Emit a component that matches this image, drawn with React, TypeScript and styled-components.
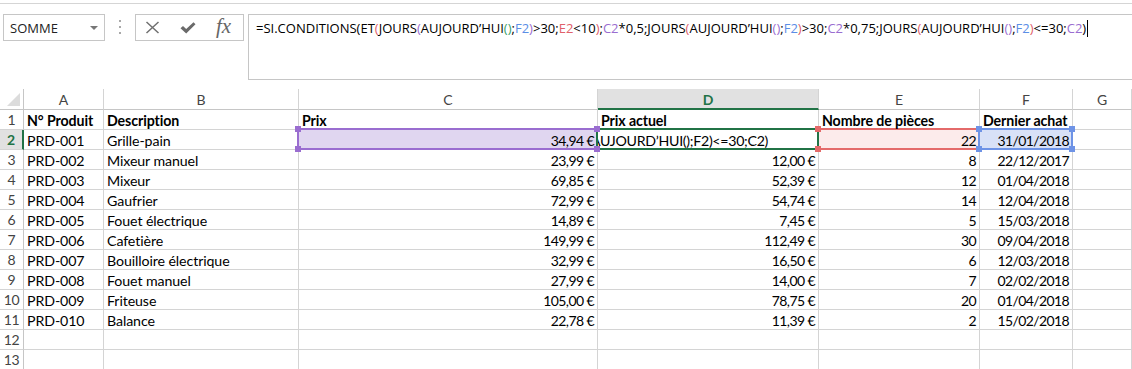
import styled, { createGlobalStyle } from "styled-components";

const GlobalStyle = createGlobalStyle`
  html, body {
    margin: 0;
    padding: 0;
    background: #fff;
    overflow: hidden;
  }
  body {
    font-family: Lato, "Liberation Sans", sans-serif;
  }
`;

const BLACK = "#000";
const RED = "#e0606a";
const PURPLE = "#9a6dd0";
const BLUE = "#5b8ee6";
const GREEN = "#3aa06a";
const EXCEL_GREEN = "#217346";

const formula: [string, string][] = [
  ["=SI.CONDITIONS(ET", BLACK],
  ["(", RED],
  ["JOURS", BLACK],
  ["(", PURPLE],
  ["AUJOURD’HUI", BLACK],
  ["()", GREEN],
  [";", BLACK],
  ["F2", BLUE],
  [")", PURPLE],
  [">30;", BLACK],
  ["E2", RED],
  ["<10", BLACK],
  [")", RED],
  [";", BLACK],
  ["C2", PURPLE],
  ["*0,5;JOURS", BLACK],
  ["(", RED],
  ["AUJOURD’HUI", BLACK],
  ["()", PURPLE],
  [";", BLACK],
  ["F2", BLUE],
  [")", RED],
  [">30;", BLACK],
  ["C2", PURPLE],
  ["*0,75;JOURS", BLACK],
  ["(", RED],
  ["AUJOURD’HUI", BLACK],
  ["()", PURPLE],
  [";", BLACK],
  ["F2", BLUE],
  [")", RED],
  ["<=30;", BLACK],
  ["C2", PURPLE],
  [")", BLACK],
];

const columns = ["A", "B", "C", "D", "E", "F", "G"];

const rows: string[][] = [
  ["N° Produit", "Description", "Prix", "Prix actuel", "Nombre de pièces", "Dernier achat", ""],
  ["PRD-001", "Grille-pain", "34,94 €", "", "22", "31/01/2018", ""],
  ["PRD-002", "Mixeur manuel", "23,99 €", "12,00 €", "8", "22/12/2017", ""],
  ["PRD-003", "Mixeur", "69,85 €", "52,39 €", "12", "01/04/2018", ""],
  ["PRD-004", "Gaufrier", "72,99 €", "54,74 €", "14", "12/04/2018", ""],
  ["PRD-005", "Fouet électrique", "14,89 €", "7,45 €", "5", "15/03/2018", ""],
  ["PRD-006", "Cafetière", "149,99 €", "112,49 €", "30", "09/04/2018", ""],
  ["PRD-007", "Bouilloire électrique", "32,99 €", "16,50 €", "6", "12/03/2018", ""],
  ["PRD-008", "Fouet manuel", "27,99 €", "14,00 €", "7", "02/02/2018", ""],
  ["PRD-009", "Friteuse", "105,00 €", "78,75 €", "20", "01/04/2018", ""],
  ["PRD-010", "Balance", "22,78 €", "11,39 €", "2", "15/02/2018", ""],
  ["", "", "", "", "", "", ""],
  ["", "", "", "", "", "", ""],
];

// column index -> reference highlight on row 2
const marks: Record<number, { line: string; fill: string }> = {
  2: { line: PURPLE, fill: "#e0d6f0" },
  4: { line: "#e46a6a", fill: "#fcebeb" },
  5: { line: "#6e93e6", fill: "#d8e1f7" },
};

const App = () => {
  return (
    <>
      <GlobalStyle />
      <Page>
        <TopStrip />
        <FormulaBar>
          <NameBox>
            SOMME
            <DropArrow />
          </NameBox>
          <Grip>
            <Dot />
            <Dot />
            <Dot />
          </Grip>
          <ButtonBox>
            <svg width="15" height="13" viewBox="0 0 15 13">
              <path d="M1.5 1 L13.5 12 M13.5 1 L1.5 12" stroke="#707070" strokeWidth="1.5" fill="none" />
            </svg>
            <svg width="16" height="12" viewBox="0 0 16 12">
              <path d="M0.5 6.2 L3 4 L6.2 7 L13.5 0.3 L15.5 2.3 L6.2 11.6 Z" fill="#6a6a6a" />
            </svg>
            <FxLabel>fx</FxLabel>
          </ButtonBox>
          <FormulaInput>
            {formula.map(([text, color], i) => (
              <Token key={i} $color={color}>
                {text}
              </Token>
            ))}
            <Caret />
          </FormulaInput>
        </FormulaBar>

        <Sheet>
          <Corner>
            <CornerTriangle />
          </Corner>
          {columns.map((c) => (
            <ColHeader key={c} $active={c === "D"}>
              {c}
            </ColHeader>
          ))}
          {rows.map((row, r) => (
            <RowGroup key={r}>
              <RowHeader $active={r === 1}>{r + 1}</RowHeader>
              {row.map((value, c) => {
                const numeric = r > 0 && c >= 2;
                const mark = r === 1 ? marks[c] : undefined;
                if (r === 1 && c === 3) {
                  return (
                    <Cell key={c} $numeric={false} $bold={false}>
                      <EditText>AUJOURD’HUI();F2)&lt;=30;C2)</EditText>
                      <ActiveFrame />
                    </Cell>
                  );
                }
                return (
                  <Cell key={c} $numeric={numeric} $bold={r === 0}>
                    {mark && (
                      <Mark $line={mark.line} $fill={mark.fill}>
                        <Handle $color={mark.line} $v="top" $h="left" />
                        <Handle $color={mark.line} $v="top" $h="right" />
                        <Handle $color={mark.line} $v="bottom" $h="left" />
                        <Handle $color={mark.line} $v="bottom" $h="right" />
                      </Mark>
                    )}
                    <CellText>{value}</CellText>
                  </Cell>
                );
              })}
            </RowGroup>
          ))}
        </Sheet>
      </Page>
    </>
  );
};

const Page = styled.div`
  width: 1132px;
  height: 369px;
  overflow: hidden;
`;

const TopStrip = styled.div`
  height: 3px;
  border-bottom: 1px solid #d5d5d5;
`;

const FormulaBar = styled.div`
  display: flex;
  align-items: flex-start;
  height: 66px;
  padding: 10px 0 0 3px;
  margin-bottom: 9px;
`;

const NameBox = styled.div`
  box-sizing: border-box;
  width: 102px;
  height: 27px;
  border: 1px solid #c6c6c6;
  display: flex;
  align-items: center;
  padding: 0 6px 0 6px;
  font-family: "Open Sans", "Noto Sans", sans-serif;
  font-size: 13px;
  color: #222;
`;

const DropArrow = styled.span`
  margin-left: auto;
  width: 0;
  height: 0;
  border-left: 4px solid transparent;
  border-right: 4px solid transparent;
  border-top: 4px solid #777;
`;

const Grip = styled.div`
  display: flex;
  flex-direction: column;
  gap: 4px;
  margin: 6px 0 0 14px;
`;

const Dot = styled.span`
  width: 2px;
  height: 2px;
  background: #a8a8a8;
`;

const ButtonBox = styled.div`
  box-sizing: border-box;
  width: 109px;
  height: 27px;
  margin-left: 14px;
  border: 1px solid #c6c6c6;
  display: flex;
  align-items: center;
  gap: 20px;
  padding-left: 9px;
`;

const FxLabel = styled.span`
  font-family: "Liberation Serif", serif;
  font-style: italic;
  font-size: 21px;
  color: #666;
  line-height: 1;
  margin-top: -3px;
`;

const FormulaInput = styled.div`
  box-sizing: border-box;
  flex: 1;
  height: 66px;
  margin-left: 4px;
  border: 1px solid #c6c6c6;
  border-right: none;
  padding: 4px 0 0 7px;
  font-family: "Open Sans", "Noto Sans", sans-serif;
  font-size: 13px;
  line-height: 18px;
  white-space: nowrap;
  overflow: hidden;
`;

const Token = styled.span<{ $color: string }>`
  color: ${(p) => p.$color};
`;

const Caret = styled.span`
  display: inline-block;
  width: 0;
  height: 17px;
  border-left: 1px solid #000;
  margin-left: 1px;
  vertical-align: -4px;
`;

const Sheet = styled.div`
  display: grid;
  grid-template-columns: 24px 80px 195px 299px 221px 161px 93px 1fr;
  grid-template-rows: 21px;
  grid-auto-rows: 20px;
`;

const RowGroup = styled.div`
  display: contents;
`;

const Corner = styled.div`
  box-sizing: border-box;
  border-right: 1px solid #c6c6c6;
  border-bottom: 1px solid #c6c6c6;
  display: flex;
  align-items: flex-end;
  justify-content: flex-end;
  padding: 0 3px 3px 0;
`;

const CornerTriangle = styled.div`
  width: 13px;
  height: 13px;
  background: #dcdcdc;
  clip-path: polygon(100% 0, 100% 100%, 0 100%);
`;

const ColHeader = styled.div<{ $active: boolean }>`
  box-sizing: border-box;
  display: flex;
  align-items: center;
  justify-content: center;
  padding-top: 1px;
  border-right: 1px solid #d4d4d4;
  border-bottom: ${(p) => (p.$active ? `2px solid ${EXCEL_GREEN}` : "1px solid #c6c6c6")};
  background: ${(p) => (p.$active ? "#e1e1e1" : "#fff")};
  color: ${(p) => (p.$active ? EXCEL_GREEN : "#444")};
  font-weight: ${(p) => (p.$active ? 700 : 400)};
  font-size: 14px;
`;

const RowHeader = styled.div<{ $active: boolean }>`
  box-sizing: border-box;
  display: flex;
  align-items: center;
  justify-content: center;
  border-bottom: 1px solid #d4d4d4;
  border-right: ${(p) => (p.$active ? `2px solid ${EXCEL_GREEN}` : "1px solid #c6c6c6")};
  background: ${(p) => (p.$active ? "#e1e1e1" : "#fff")};
  color: ${(p) => (p.$active ? EXCEL_GREEN : "#444")};
  font-weight: ${(p) => (p.$active ? 700 : 400)};
  font-size: 14px;
  letter-spacing: -0.3px;
`;

const Cell = styled.div<{ $numeric: boolean; $bold: boolean }>`
  box-sizing: border-box;
  position: relative;
  display: flex;
  align-items: center;
  justify-content: ${(p) => (p.$numeric ? "flex-end" : "flex-start")};
  padding: 1px 3px 0 3px;
  border-right: 1px solid #d4d4d4;
  border-bottom: 1px solid #d4d4d4;
  font-size: ${(p) => (p.$numeric ? "14px" : "14.2px")};
  letter-spacing: ${(p) => (p.$numeric ? "-0.6px" : "-0.1px")};
  font-weight: ${(p) => (p.$bold ? 700 : 400)};
  color: #000;
  white-space: nowrap;
`;

const CellText = styled.span`
  position: relative;
  z-index: 1;
`;

const EditText = styled.span`
  display: block;
  position: relative;
  z-index: 1;
  margin-left: -3px;
  overflow: hidden;
  text-indent: -7px;
  width: 100%;
  letter-spacing: -0.3px;
`;

const Mark = styled.div<{ $line: string; $fill: string }>`
  position: absolute;
  top: -2px;
  left: -2px;
  right: -1px;
  bottom: -1px;
  border: 2px solid ${(p) => p.$line};
  background: ${(p) => p.$fill};
`;

const Handle = styled.span<{ $color: string; $v: "top" | "bottom"; $h: "left" | "right" }>`
  position: absolute;
  z-index: 3;
  width: 6px;
  height: 6px;
  background: ${(p) => p.$color};
  ${(p) => p.$v}: -4px;
  ${(p) => p.$h}: -4px;
`;

const ActiveFrame = styled.div`
  position: absolute;
  z-index: 2;
  top: -2px;
  left: -2px;
  right: -1px;
  bottom: -1px;
  border: 2px solid ${EXCEL_GREEN};
`;

export default App;
